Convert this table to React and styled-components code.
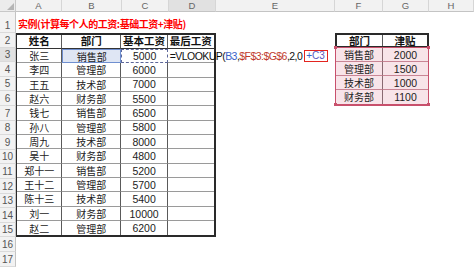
import React from 'react';
import styled, { createGlobalStyle } from 'styled-components';

const Global = createGlobalStyle`
  html, body { margin: 0; padding: 0; background: #fff; }
  body { font-family: "Liberation Sans", "Noto Sans CJK SC", sans-serif; color: #222; }
`;

const CJK = `"Noto Sans CJK SC", "Liberation Sans", sans-serif`;

const Sheet = styled.div`
  width: 474px;
  height: 269px;
  overflow: hidden;
  display: grid;
  grid-template-columns: 16px 46px 60px 47px 47px 119px 48px 46px 1fr;
  grid-template-rows: 12px 21px repeat(16, 14.6px);
  background: #fff;
`;

const Corner = styled.div`
  grid-column: 1;
  grid-row: 1;
  background: #ececec;
  border-right: 1px solid #c8c8c8;
  border-bottom: 1px solid #c8c8c8;
  box-sizing: border-box;
  display: flex;
  align-items: flex-end;
  justify-content: flex-end;
  padding: 1px;
  svg { display: block; }
`;

const ColHead = styled.div`
  grid-row: 1;
  grid-column: ${p => p.$col};
  background: ${p => (p.$active ? '#e1e1e1' : '#f2f2f2')};
  border-right: 1px solid #d6d6d6;
  border-bottom: 1px solid #c4c4c4;
  box-sizing: border-box;
  display: flex;
  align-items: center;
  justify-content: center;
  font-size: 9.5px;
  color: #666;
  line-height: 1;
`;

const RowHead = styled.div`
  grid-column: 1;
  grid-row: ${p => p.$row};
  background: ${p => (p.$active ? '#e1e1e1' : '#f2f2f2')};
  border-right: 1px solid #c4c4c4;
  border-bottom: 1px solid #dadada;
  box-sizing: border-box;
  display: flex;
  align-items: flex-end;
  justify-content: center;
  padding-bottom: 1px;
  font-size: 10px;
  color: #555;
  line-height: 1;
`;

const Title = styled.div`
  grid-column: 2 / 8;
  grid-row: 2;
  display: flex;
  align-items: center;
  padding: 1px 0 0 2px;
  font-family: ${CJK};
  font-weight: 700;
  font-size: 10px;
  letter-spacing: -0.45px;
  color: #ff0000;
  white-space: nowrap;
`;

const MainTable = styled.div`
  grid-column: 2 / 6;
  grid-row: 3 / 17;
  display: grid;
  grid-template-columns: 46fr 60fr 47fr 47fr;
  grid-template-rows: repeat(14, 1fr);
  border: 2px solid #2a2a2a;
  border-left-width: 1.5px;
  box-sizing: border-box;
  margin-top: -0.5px;
`;

const Cell = styled.div`
  box-sizing: border-box;
  display: flex;
  align-items: center;
  justify-content: ${p => (p.$left ? 'flex-start' : 'center')};
  padding: ${p => (p.$left ? '1px 0 0 2px' : '1px 0 0 0')};
  border-right: ${p => (p.$lastCol ? 'none' : '1px solid #5a5a5a')};
  border-bottom: ${p => (p.$lastRow ? 'none' : p.$head ? '1px solid #333' : '1px solid #9a9a9a')};
  background: ${p => p.$fill || 'transparent'};
  font-family: ${p => (p.$num ? `"Liberation Sans", sans-serif` : CJK)};
  font-size: ${p => (p.$num ? '10.5px' : p.$head ? '10.5px' : '10px')};
  font-weight: ${p => (p.$head ? 700 : 400)};
  color: ${p => (p.$head ? '#111' : '#222')};
  white-space: nowrap;
  line-height: 1;
  min-width: 0;
`;

const RefB = styled(Cell)`
  background: #dfe6f4;
  border: 1px solid #6f8fd0;
`;

const RefC = styled(Cell)`
  border: 1.5px dashed #5d6799;
  border-right: 1.5px dashed #5d6799;
`;

const FormulaCell = styled(Cell)`
  overflow: visible;
  position: relative;
  z-index: 2;
  font-family: "Liberation Sans", sans-serif;
  font-size: 10.5px;
  letter-spacing: -0.55px;
  color: #111;
`;

const Tok = styled.span`
  color: ${p => p.$c || '#111'};
`;

const PlusBox = styled.span`
  display: inline-flex;
  align-items: center;
  margin-left: 2px;
  height: 12px;
  padding: 0 2px 0 1px;
  border: 1.5px solid #e3241f;
  box-sizing: border-box;
  font-size: 10px;
  letter-spacing: 0;
`;

const Side = styled.div`
  grid-column: 7 / 9;
  grid-row: 3 / 8;
  display: flex;
  flex-direction: column;
  margin-top: -0.5px;
`;

const SideHead = styled.div`
  display: grid;
  grid-template-columns: 48fr 46fr;
  height: 14.6px;
  border: 2px solid #2a2a2a;
  border-bottom: 1px solid #2a2a2a;
  box-sizing: border-box;
`;

const Range = styled.div`
  position: relative;
  flex: 1;
  display: grid;
  grid-template-columns: 48fr 46fr;
  grid-template-rows: repeat(4, 1fr);
  background: #f8e4e9;
  border: 1px solid #c8506c;
  border-bottom: 2px solid #c8506c;
  border-left-width: 1.5px;
  box-sizing: border-box;
`;

const RangeCell = styled(Cell)`
  border-right: ${p => (p.$lastCol ? 'none' : '1px solid #8a6a72')};
  border-bottom: ${p => (p.$lastRow ? 'none' : '1px solid #c98595')};
`;

const Handle = styled.span`
  position: absolute;
  width: 3px;
  height: 3px;
  background: #c8506c;
  ${p => (p.$top ? 'top: -2px;' : 'bottom: -2.5px;')}
  ${p => (p.$l ? 'left: -2px;' : 'right: -2px;')}
`;

const cols = ['A', 'B', 'C', 'D', 'E', 'F', 'G', 'H'];

const rows = [
  ['张三', '销售部', '5000'],
  ['李四', '管理部', '6000'],
  ['王五', '技术部', '7000'],
  ['赵六', '财务部', '5500'],
  ['钱七', '销售部', '6500'],
  ['孙八', '管理部', '5800'],
  ['周九', '技术部', '8000'],
  ['吴十', '财务部', '4800'],
  ['郑十一', '销售部', '5200'],
  ['王十二', '管理部', '5700'],
  ['陈十三', '技术部', '5400'],
  ['刘一', '财务部', '10000'],
  ['赵二', '管理部', '6200'],
];

const bonus = [
  ['销售部', '2000'],
  ['管理部', '1500'],
  ['技术部', '1000'],
  ['财务部', '1100'],
];

export default function App() {
  return (
    <>
      <Global />
      <Sheet>
        <Corner>
          <svg width="7" height="7" viewBox="0 0 7 7">
            <polygon points="7,0 7,7 0,7" fill="#b5b5b5" />
          </svg>
        </Corner>
        {cols.map((c, i) => (
          <ColHead key={c} $col={i + 2} $active={c === 'D'}>{c}</ColHead>
        ))}
        {Array.from({ length: 17 }, (_, i) => (
          <RowHead key={i} $row={i + 2} $active={i + 1 === 3}>{i + 1}</RowHead>
        ))}
        <Title>实例(计算每个人的工资:基础工资+津贴)</Title>

        <MainTable>
          <Cell $head>姓名</Cell>
          <Cell $head>部门</Cell>
          <Cell $head>基本工资</Cell>
          <Cell $head $lastCol>最后工资</Cell>
          {rows.map((r, i) => {
            const last = i === rows.length - 1;
            if (i === 0) {
              return (
                <React.Fragment key={i}>
                  <Cell>{r[0]}</Cell>
                  <RefB>{r[1]}</RefB>
                  <RefC $num>{r[2]}</RefC>
                  <FormulaCell $left $lastCol>
                    <Tok>=VLOOKUP(</Tok>
                    <Tok $c="#3a63c8">B3</Tok>
                    <Tok>,</Tok>
                    <Tok $c="#c0392b">$F$3:$G$6</Tok>
                    <Tok>,2,0</Tok>
                    <PlusBox>
                      <Tok $c="#3a63c8">+</Tok>
                      <Tok $c="#5a58c0">C3</Tok>
                    </PlusBox>
                  </FormulaCell>
                </React.Fragment>
              );
            }
            return (
              <React.Fragment key={i}>
                <Cell $lastRow={last}>{r[0]}</Cell>
                <Cell $lastRow={last}>{r[1]}</Cell>
                <Cell $lastRow={last} $num>{r[2]}</Cell>
                <Cell $lastRow={last} $lastCol />
              </React.Fragment>
            );
          })}
        </MainTable>

        <Side>
          <SideHead>
            <Cell $head $lastRow>部门</Cell>
            <Cell $head $lastRow $lastCol>津贴</Cell>
          </SideHead>
          <Range>
            {bonus.map((b, i) => (
              <React.Fragment key={i}>
                <RangeCell $lastRow={i === 3}>{b[0]}</RangeCell>
                <RangeCell $lastRow={i === 3} $lastCol $num>{b[1]}</RangeCell>
              </React.Fragment>
            ))}
            <Handle $top $l />
            <Handle $top />
            <Handle $l />
            <Handle />
          </Range>
        </Side>
      </Sheet>
    </>
  );
}
